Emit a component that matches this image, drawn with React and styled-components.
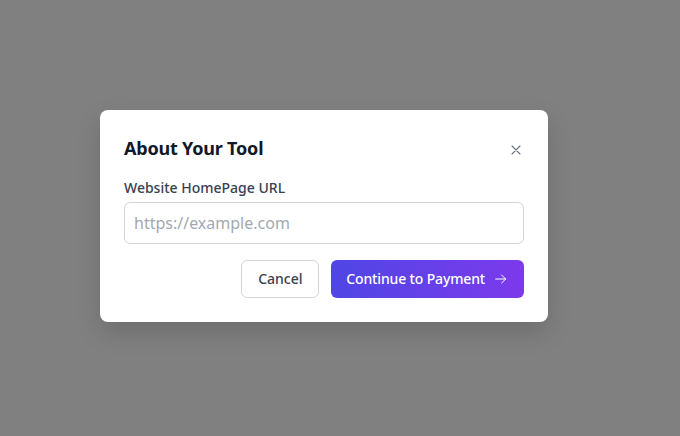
import React from "react";
import styled, { createGlobalStyle } from "styled-components";

const Global = createGlobalStyle`
  html, body { margin: 0; padding: 0; }
  body { font-family: "Noto Sans", "Open Sans", sans-serif; }
  * { box-sizing: border-box; }
`;

const Overlay = styled.div`
  width: 680px;
  height: 436px;
  background: #808080;
  display: flex;
  align-items: flex-start;
  justify-content: flex-start;
  padding-top: 110px;
  padding-left: 100px;
`;

const Dialog = styled.div`
  width: 448px;
  background: #fff;
  border-radius: 8px;
  padding: 24px;
  box-shadow: 0 10px 25px rgba(0, 0, 0, 0.15);
  display: flex;
  flex-direction: column;
`;

const Header = styled.div`
  display: flex;
  align-items: center;
  justify-content: space-between;
  height: 28px;
`;

const Title = styled.h2`
  margin: 0;
  font-size: 18px;
  font-weight: 700;
  color: #111827;
  letter-spacing: -0.2px;
`;

const Close = styled.button`
  border: none;
  background: none;
  padding: 0;
  width: 16px;
  height: 16px;
  display: flex;
  align-items: center;
  justify-content: center;
  color: #6b7280;
  margin-top: 4px;
`;

const Label = styled.label`
  margin-top: 16px;
  font-size: 14px;
  font-weight: 500;
  color: #374151;
  line-height: 20px;
`;

const Input = styled.input`
  margin-top: 4px;
  width: 100%;
  height: 42px;
  border: 1px solid #d1d5db;
  border-radius: 6px;
  padding: 0 9px;
  font-family: inherit;
  font-size: 16px;
  color: #111827;
  outline: none;
  &::placeholder { color: #a3a8b1; }
`;

const Actions = styled.div`
  margin-top: 16px;
  display: flex;
  justify-content: flex-end;
  gap: 12px;
`;

const Button = styled.button`
  height: 38px;
  border-radius: 6px;
  font-family: inherit;
  font-size: 14px;
  font-weight: 500;
  line-height: 20px;
  display: flex;
  align-items: center;
  justify-content: center;
  gap: 8px;
  padding: 0 15px 1px;
  white-space: nowrap;
  cursor: pointer;
  border: ${(p) => (p.$primary ? "none" : "1px solid #d1d5db")};
  background: ${(p) => (p.$primary ? "linear-gradient(90deg, #4f46e5, #7c3aed)" : "#fff")};
  color: ${(p) => (p.$primary ? "#fff" : "#374151")};
  min-width: ${(p) => p.$w || 0}px;
  letter-spacing: ${(p) => (p.$primary ? "-0.15px" : "0")};
  svg { flex-shrink: 0; }
`;

export default function App() {
  return (
    <>
      <Global />
      <Overlay>
        <Dialog>
          <Header>
            <Title>About Your Tool</Title>
            <Close aria-label="Close">
              <svg width="10" height="10" viewBox="0 0 10 10" fill="none" stroke="currentColor" strokeWidth="1.1" strokeLinecap="round">
                <path d="M1 1L9 9M9 1L1 9" />
              </svg>
            </Close>
          </Header>
          <Label>Website HomePage URL</Label>
          <Input placeholder="https://example.com" />
          <Actions>
            <Button $w={78}>Cancel</Button>
            <Button $primary>
              Continue to Payment
              <svg width="16" height="16" viewBox="0 0 24 24" fill="none" stroke="currentColor" strokeWidth="1.5" strokeLinecap="round" strokeLinejoin="round">
                <path d="M4 12h15M13 6l6 6-6 6" />
              </svg>
            </Button>
          </Actions>
        </Dialog>
      </Overlay>
    </>
  );
}
